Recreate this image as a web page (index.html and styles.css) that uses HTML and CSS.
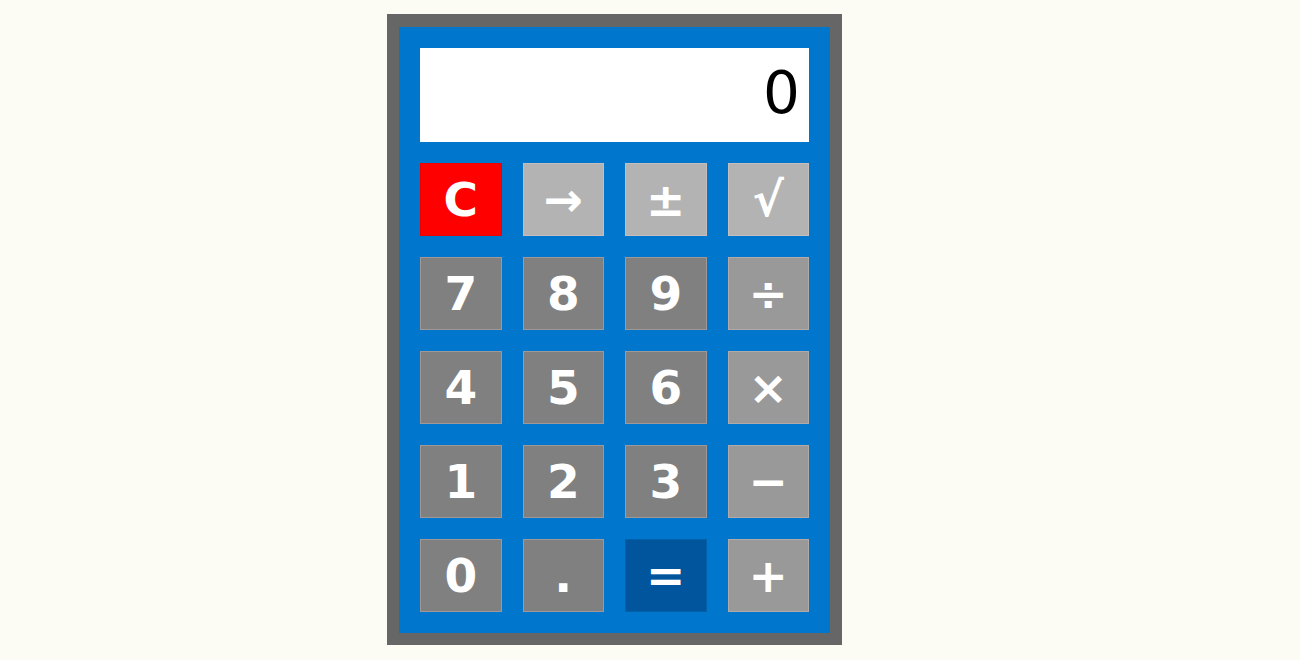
FILE: index.html
```html
<!DOCTYPE html>
<html>
<head>
<meta charset="utf-8">
<link rel="stylesheet" href="styles.css">
</head>
<body>
<div class="page">
  <div class="calc">
    <div class="display">0</div>
    <div class="keys">
      <div class="key clear">C</div>
      <div class="key fn">&#8594;</div>
      <div class="key fn">&#177;</div>
      <div class="key fn">&#8730;</div>
      <div class="key num">7</div>
      <div class="key num">8</div>
      <div class="key num">9</div>
      <div class="key op">&#247;</div>
      <div class="key num">4</div>
      <div class="key num">5</div>
      <div class="key num">6</div>
      <div class="key op">&#215;</div>
      <div class="key num">1</div>
      <div class="key num">2</div>
      <div class="key num">3</div>
      <div class="key op">&#8722;</div>
      <div class="key num">0</div>
      <div class="key num">.</div>
      <div class="key eq">=</div>
      <div class="key op">+</div>
    </div>
  </div>
</div>
</body>
</html>
```
FILE: styles.css
```css
html, body {
  margin: 0;
  padding: 0;
  background: #fcfcf4;
}
.page {
  padding: 14px 0 0 387px;
}
.calc {
  width: 389px;
  border: 12px solid #666666;
  border-top-width: 13px;
  background: #0077cc;
  padding: 21px;
  display: flex;
  flex-direction: column;
  gap: 21px;
}
.display {
  height: 94px;
  background: #ffffff;
  font-family: "DejaVu Sans", Verdana, sans-serif;
  font-size: 58px;
  line-height: 90px;
  text-align: right;
  padding-right: 9px;
  color: #000;
}
.keys {
  display: grid;
  grid-template-columns: repeat(4, 1fr);
  grid-auto-rows: 73px;
  column-gap: 21px;
  row-gap: 21px;
}
.key {
  display: flex;
  align-items: center;
  justify-content: center;
  color: #ffffff;
  font-family: "DejaVu Sans", Verdana, sans-serif;
  font-weight: bold;
  font-size: 47px;
  box-sizing: border-box;
  border: 1px solid rgba(255, 220, 220, 0.25);
}
.clear { background: #ff0000; border-color: #ee0000; }
.fn { background: #b3b3b3; }
.num { background: #808080; }
.op { background: #999999; }
.eq { background: #00559c; border-color: #0060a8; }
```
